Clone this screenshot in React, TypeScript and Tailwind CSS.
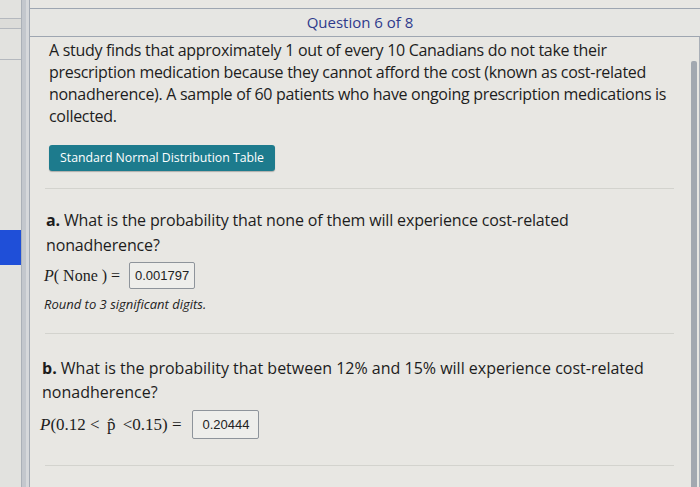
import React from 'react';

// 左側のタブ列
const SideTabs: React.FC = () => (
  <div className="w-[21px] flex flex-col bg-[#e2e2df]">
    <div className="h-[19px] border-b border-[#b4b8be]" />
    <div className="h-[10px] border-b border-[#b4b8be] bg-[#dcdcd9]" />
    <div className="h-[31px] border-b border-[#b4b8be]" />
    <div className="h-[170px]" />
    <div className="h-[35px] bg-[#1f4fd8]" />
    <div className="flex-1" />
  </div>
);

const AnswerBox: React.FC<{ value: string; w: string; h: string }> = ({ value, w, h }) => (
  <span
    className={`inline-flex items-center justify-center border border-[#8e949b] rounded-[2px] bg-[#eeeeeb] text-[13px] text-[#222] font-['Liberation_Sans',Arial,sans-serif] ${w} ${h}`}
  >
    {value}
  </span>
);

const App: React.FC = () => {
  return (
    <div className="w-[700px] h-[487px] flex overflow-hidden bg-[#e8e7e3] text-[#1d1d1d] font-['Open_Sans',sans-serif]">
      <SideTabs />
      {/* 区切りバー */}
      <div className="w-[9px] flex border-l border-[#aab0b8]">
        <div className="w-[4px] bg-[#c3c7cd]" />
        <div className="w-[4px] bg-[#d6d8db] border-r border-[#a3aab4]" />
      </div>

      <div className="flex-1 flex flex-col pt-[8px]">
        {/* ヘッダー */}
        <div className="h-[29px] border-t border-b border-[#9ea6b1] bg-[#e6e6e3] flex items-center justify-center text-[15px] text-[#2e3a8c] pr-[10px]">
          Question 6 of 8
        </div>

        <div className="flex-1 flex">
          <div className="flex-1 pl-[19px] pr-[8px]">
            <p className="text-[16px] leading-[22px] mt-[2px] tracking-[-0.3px]">
              A study finds that approximately 1 out of every 10 Canadians do not take their prescription medication
              because they cannot afford the cost (known as cost-related nonadherence). A sample of 60 patients who
              have ongoing prescription medications is collected.
            </p>

            <button className="mt-[18px] h-[26px] px-[11px] rounded-[3px] bg-[#1d7b8d] text-white text-[12.3px] shadow-[0_1px_1px_rgba(0,0,0,0.25)]">
              Standard Normal Distribution Table
            </button>

            <div className="mt-[17px] h-px bg-[#d3d3ce] -ml-[4px] mr-[6px]" />

            {/* a */}
            <div className="pt-[19px] -ml-[3px]">
              <p className="text-[16px] leading-[25px] tracking-[-0.15px]">
                <span className="font-bold">a.</span> What is the probability that none of them will experience
                cost-related nonadherence?
              </p>
              <div className="mt-[4px] flex items-center gap-[9px] font-['Liberation_Serif',serif] text-[16px] -ml-[2px]">
                <span>
                  <i>P</i>( None ) =
                </span>
                <AnswerBox value="0.001797" w="w-[66px]" h="h-[27px]" />
              </div>
              <p className="mt-[6px] text-[13px] leading-[18px] italic -ml-[2px]">Round to 3 significant digits.</p>
            </div>

            <div className="mt-[20px] h-px bg-[#d3d3ce] -ml-[4px] mr-[6px]" />

            {/* b */}
            <div className="pt-[22px] -ml-[7px]">
              <p className="text-[16px] leading-[24px]">
                <span className="font-bold">b.</span> What is the probability that between 12% and 15% will experience
                cost-related nonadherence?
              </p>
              <div className="mt-[6px] flex items-center gap-[11px] font-['Liberation_Serif',serif] text-[17px] -ml-[2px]">
                <span>
                  <i>P</i>(0.12 &lt; <span className="mx-[3px]">p&#770;</span> &lt;0.15) =
                </span>
                <AnswerBox value="0.20444" w="w-[67px]" h="h-[29px]" />
              </div>
            </div>

            <div className="mt-[26px] h-px bg-[#d3d3ce] -ml-[4px] mr-[6px]" />
          </div>

          {/* スクロールバー */}
          <div className="w-[12px] flex border-r border-[#a9afb7]">
            <div className="w-[3px]" />
            <div className="w-[6px] mt-[24px] bg-[#a2a8b0] rounded-t-[2px]" />
          </div>
        </div>
      </div>
    </div>
  );
};

export default App;
